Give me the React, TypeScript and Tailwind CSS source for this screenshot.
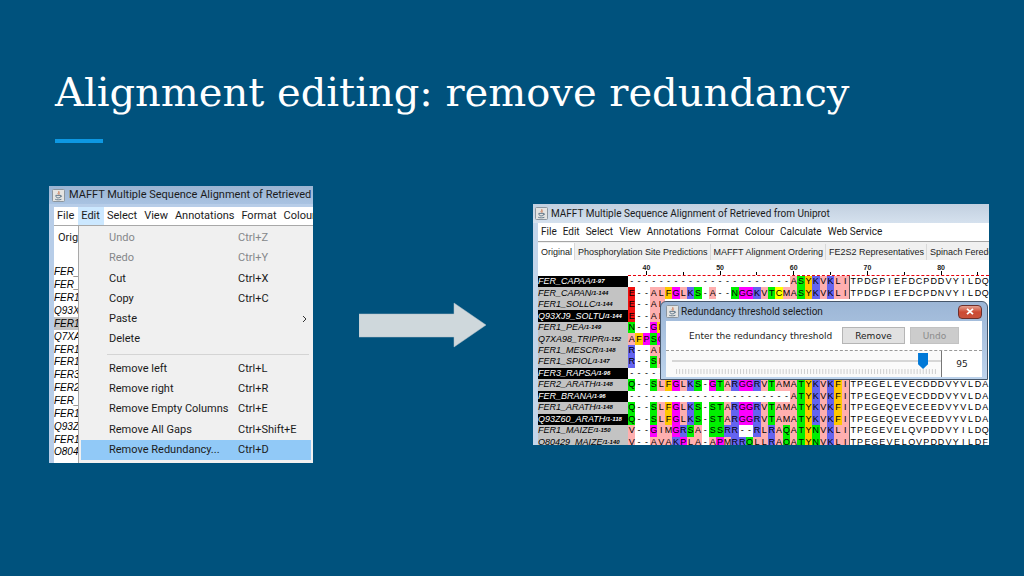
import { useState } from 'react';

const GAP22 = '-'.repeat(22);

const SEQUENCES = [
  { id: 'FER_CAPAA', range: '1-97', selected: true, seq: GAP22 + 'ASYKVKLITPDGPIEFDCPDDVYILDQ' },
  { id: 'FER_CAPAN', range: '1-144', seq: 'E--ALFGLKS-A--NGGKVTCMASYKVKLITPDGPIEFDCPDNVYILDQ' },
  { id: 'FER1_SOLLC', range: '1-144', seq: 'E--AL' },
  { id: 'Q93XJ9_SOLTU', range: '1-144', selected: true, seq: 'E--AL' },
  { id: 'FER1_PEA', range: '1-149', seq: 'N--GF' },
  { id: 'Q7XA98_TRIPR', range: '1-152', seq: 'AFPSG' },
  { id: 'FER1_MESCR', range: '1-148', seq: 'R--AL' },
  { id: 'FER1_SPIOL', range: '1-147', seq: 'R--SL' },
  { id: 'FER3_RAPSA', range: '1-96', selected: true, seq: '-----' },
  { id: 'FER2_ARATH', range: '1-148', seq: 'Q--SLFGLKS-GTARGGRVTAMATYKVKFITPEGELEVECDDDVYVLDA' },
  { id: 'FER_BRANA', range: '1-96', selected: true, seq: GAP22 + 'ATYKVKFITPEGEQEVECDDDVYVLDA' },
  { id: 'FER1_ARATH', range: '1-148', seq: 'Q--SLFGLKS-STARGGRVTAMATYKVKFITPEGEQEVECEEDVYVLDA' },
  { id: 'Q93Z60_ARATH', range: '1-118', selected: true, seq: 'Q--SLFGLKS-STARGGRVTAMATYKVKFITPEGEQEVECEEDVYVLDA' },
  { id: 'FER1_MAIZE', range: '1-150', seq: 'V--GIMGRSA-SSRR--RLRAQATYNVKLITPEGEVELQVPDDVYILDQ' },
  { id: 'O80429_MAIZE', range: '1-140', seq: 'V--AVAKPLA-APMRRQLLRAQATYNVKLITPEGEVELQVPDDVYILDF' },
];

// columns past this one are not part of the selected region
const COLOURED = 30;

const residueColour = (r: string) => {
  if ('AVLIM'.includes(r)) return 'bg-[#ffafaf]';
  if ('FYW'.includes(r)) return 'bg-[#ffc800]';
  if ('KRH'.includes(r)) return 'bg-[#6464f0]';
  if ('DE'.includes(r)) return 'bg-[#f01010]';
  if ('STNQ'.includes(r)) return 'bg-[#00f000]';
  if ('PG'.includes(r)) return 'bg-[#ff00ff]';
  if (r === 'C') return 'bg-[#ffff00]';
  return '';
};

const EDIT_TOP = [
  { label: 'Undo', key: 'Ctrl+Z', disabled: true },
  { label: 'Redo', key: 'Ctrl+Y', disabled: true },
  { label: 'Cut', key: 'Ctrl+X' },
  { label: 'Copy', key: 'Ctrl+C' },
  { label: 'Paste', sub: true },
  { label: 'Delete' },
];

const EDIT_BOTTOM = [
  { label: 'Remove left', key: 'Ctrl+L' },
  { label: 'Remove right', key: 'Ctrl+R' },
  { label: 'Remove Empty Columns', key: 'Ctrl+E' },
  { label: 'Remove All Gaps', key: 'Ctrl+Shift+E' },
  { label: 'Remove Redundancy...', key: 'Ctrl+D', active: true },
];

const MENUS = ['File', 'Edit', 'Select', 'View', 'Annotations', 'Format', 'Colour', 'Calculate', 'Web Service'];
const TABS = ['Original', 'Phosphorylation Site Predictions', 'MAFFT Alignment Ordering', 'FE2S2 Representatives', 'Spinach Feredoxin'];

function JavaIcon() {
  return (
    <svg viewBox="0 0 13 13" className="h-[13px] w-[13px] shrink-0" aria-hidden="true">
      <rect x=".5" y=".5" width="12" height="12" rx="1" fill="#e4e4e2" stroke="#8c969f" />
      <path d="M6.6 2c1.3 1.3-1.6 1.9-.2 3.6M8 3.4c-.9.6-1.1 1-.6 2" fill="none" stroke="#c9744f" strokeWidth=".9" />
      <path d="M3.8 6.4h4.8c0 1.6-.7 2.5-2.4 2.5S3.9 8 3.8 6.4ZM8.6 6.6c1.4-.2 1.4 1.3-.3 1.5M3.2 10.3c1.8.7 4.4.7 6.2 0" fill="none" stroke="#587184" strokeWidth=".9" />
    </svg>
  );
}

type Item = { label: string; key?: string; disabled?: boolean; sub?: boolean; active?: boolean };

function MenuItem({ item }: { item: Item }) {
  return (
    <button
      disabled={item.disabled}
      className={`mx-0.5 grid min-h-0 flex-1 grid-cols-[129px_1fr_auto] items-center pl-7 pr-1 text-left ${item.active ? 'bg-[#91c9f7]' : ''} ${item.disabled ? 'text-[#85878a]' : ''}`}
    >
      <span className="whitespace-nowrap">{item.label}</span>
      <span className="whitespace-nowrap">{item.key}</span>
      {item.sub && (
        <svg viewBox="0 0 5 8" className="h-2 w-[5px]" aria-hidden="true">
          <path d="M1 1l3 3-3 3" fill="none" stroke="#333" />
        </svg>
      )}
    </button>
  );
}

function EditMenuWindow() {
  return (
    <section className="flex h-[277px] flex-col overflow-hidden bg-[#b7cde8] font-['Roboto',sans-serif] text-[11px] leading-4 text-[#1b1b1b]">
      <div className="flex h-[18px] items-center gap-1 bg-linear-to-b from-[#9bb4d2] to-[#a9c3e2] pl-[3px]">
        <JavaIcon />
        <h2 className="whitespace-nowrap">MAFFT Multiple Sequence Alignment of Retrieved</h2>
      </div>
      <nav className="ml-[5px] mt-[3px] flex h-[18px] shrink-0 overflow-hidden bg-white">
        {MENUS.slice(0, 7).map((m) => (
          <button key={m} className={`shrink-0 pl-[3px] pr-1 ${m === 'Edit' ? 'bg-[#cce8ff]' : ''}`}>{m}</button>
        ))}
      </nav>
      <div className="ml-[5px] flex min-h-0 flex-1 border-t border-[#a8a8a8] bg-white">
        <div className="flex w-6 flex-col overflow-hidden pb-1">
          <p className="h-10 pl-1 pt-1">Orig</p>
          {SEQUENCES.map((s, i) => (
            <p key={s.id} className={`flex min-h-0 flex-1 items-center whitespace-nowrap font-['Liberation_Sans',sans-serif] text-[10px] leading-3 italic text-black ${i === 4 ? 'bg-[#c4c4c4]' : ''}`}>
              {s.id.slice(0, 4)}
            </p>
          ))}
        </div>
        <div className="flex flex-1 flex-col border-l border-[#a9a9a9] bg-[#f0f0f0] pb-[3px] pt-0.5">
          {EDIT_TOP.map((item) => <MenuItem key={item.label} item={item} />)}
          <hr className="mb-1 ml-7 mr-1 mt-1 border-[#d4d4d4]" />
          {EDIT_BOTTOM.map((item) => <MenuItem key={item.label} item={item} />)}
        </div>
      </div>
    </section>
  );
}

function RedundancyDialog() {
  const [threshold, setThreshold] = useState(95);
  return (
    <div role="dialog" aria-labelledby="dialog-title" className="absolute bottom-[65px] left-[127px] right-px top-[97px] flex flex-col rounded-t-md border border-[#46566a] bg-linear-to-b from-[#9cb6d6] to-[#bdd3ec] px-[5px] pb-0.5 text-[10px]">
      <div className="flex h-[19px] shrink-0 items-center gap-0.5">
        <JavaIcon />
        <h3 id="dialog-title" className="flex-1 whitespace-nowrap">Redundancy threshold selection</h3>
        <button aria-label="Close" className="flex h-[14px] w-6 items-center justify-center rounded-sm border border-[#6c2f2b] bg-linear-to-b from-[#e3a091] via-[#cc4a34] to-[#c9523d]">
          <svg viewBox="0 0 8 7" className="h-[7px] w-2" aria-hidden="true">
            <path d="M1 .8l6 5.4M7 .8L1 6.2" stroke="#fff" strokeWidth="1.8" />
          </svg>
        </button>
      </div>
      <div className="flex min-h-0 flex-1 flex-col bg-white font-['DejaVu_Sans',sans-serif] text-[9px]">
        <div className="flex h-[29px] shrink-0 items-center gap-[5px] pl-[23px] pr-[23px]">
          <label htmlFor="threshold" className="flex-1 whitespace-nowrap">Enter the redundancy threshold</label>
          <button className="h-[17px] w-[63px] border border-[#b5b5b5] bg-[#e1e1e1]">Remove</button>
          <button disabled className="h-[17px] w-[49px] border border-[#c2c2c2] bg-[#cccccc] text-[#8b8b8b]">Undo</button>
        </div>
        <div className="flex min-h-0 flex-1 border-t border-dashed border-[#999]">
          <div className="flex-1 bg-[#fafafa] pl-[6px] pt-0.5">
            <input
              id="threshold"
              type="range"
              min={0}
              max={100}
              value={threshold}
              onChange={(e) => setThreshold(Number(e.target.value))}
              className="block h-4 w-full appearance-none bg-transparent bg-[linear-gradient(#d6d6d6,#d6d6d6)] bg-[length:100%_2px] bg-[position:0_7px] bg-no-repeat [&::-webkit-slider-thumb]:h-4 [&::-webkit-slider-thumb]:w-[10px] [&::-webkit-slider-thumb]:appearance-none [&::-webkit-slider-thumb]:bg-[#0078d7] [&::-webkit-slider-thumb]:[clip-path:polygon(0_0,100%_0,100%_70%,50%_100%,0_70%)]"
            />
            <svg viewBox="0 0 265 5" preserveAspectRatio="none" className="h-[5px] w-full" aria-hidden="true">
              <path d="M4 2.5h258" stroke="#cfcfcf" strokeWidth="5" strokeDasharray="1 2" />
            </svg>
          </div>
          <input
            aria-label="Threshold value"
            value={threshold}
            onChange={(e) => setThreshold(Number(e.target.value) || 0)}
            className="w-[41px] border-l border-[#777] text-center outline-none"
          />
        </div>
      </div>
    </div>
  );
}

function Ruler() {
  return (
    <div className="ml-[90px] grid h-4 shrink-0 grid-cols-[repeat(49,minmax(0,1fr))] border-b border-dashed border-b-red-600 font-['Liberation_Sans',sans-serif] text-[7px] font-bold leading-[7px]">
      {Array.from({ length: 49 }, (_, i) => (
        <div key={i} className="flex flex-col items-center justify-end">
          {i % 10 === 2 && <span>{40 + i - 2}</span>}
          {i % 5 === 2 && <span className={`w-px bg-black ${i % 10 === 2 ? 'h-1' : 'h-[3px]'}`} />}
        </div>
      ))}
    </div>
  );
}

function AlignmentWindow() {
  return (
    <section className="relative flex h-[241px] flex-col overflow-hidden bg-[#c3d5ea] font-['Roboto',sans-serif] text-[10px] leading-4 text-[#1b1b1b]">
      <div className="flex h-[19px] shrink-0 items-center gap-[3px] bg-linear-to-b from-[#c2d0e0] to-[#d5e1ee] pl-[2px]">
        <JavaIcon />
        <h2 className="whitespace-nowrap">MAFFT Multiple Sequence Alignment of Retrieved from Uniprot</h2>
      </div>
      <div className="ml-[5px] flex min-h-0 flex-1 flex-col bg-white">
        <nav className="flex h-[19px] shrink-0 border-b border-[#a5a5a5]">
          {MENUS.map((m) => <button key={m} className="whitespace-nowrap px-[3px]">{m}</button>)}
        </nav>
        <div role="tablist" className="flex h-[18px] shrink-0 items-end overflow-hidden bg-[#f0f0f0] font-['Liberation_Sans',sans-serif] text-[9px]">
          {TABS.map((t, i) => (
            <button key={t} role="tab" aria-selected={i === 0} className={`shrink-0 whitespace-nowrap border-r border-[#d9d9d9] pl-[3px] pr-0.5 ${i === 0 ? 'h-[17px] bg-white' : 'h-4'}`}>{t}</button>
          ))}
        </div>
        <Ruler />
        <div className="grid h-[172px] shrink-0 grid-rows-[repeat(15,minmax(0,1fr))] font-['Liberation_Sans',sans-serif] text-[9px] leading-[11px] text-black">
          {SEQUENCES.map((s) => (
            <div key={s.id} className="grid grid-cols-[90px_1fr]">
              <p className={`flex items-center whitespace-nowrap italic ${s.selected ? 'bg-black text-white' : 'bg-[#c3c3c3]'}`}>
                {s.id}<span className="text-[6px] font-bold">/{s.range}</span>
              </p>
              <div className="grid grid-cols-[repeat(49,minmax(0,1fr))]">
                {s.seq.split('').map((r, i) => (
                  <span key={i} className={`flex items-center justify-center ${i < COLOURED ? residueColour(r) : ''} ${i === COLOURED ? 'border-l border-[#555]' : ''}`}>{r}</span>
                ))}
              </div>
            </div>
          ))}
        </div>
      </div>
      <RedundancyDialog />
    </section>
  );
}

export default function App() {
  return (
    <main className="min-h-screen bg-[#00527d] pb-12">
      <header className="px-[55px] pt-[62px]">
        <h1 className="whitespace-nowrap font-['Roboto_Slab','DejaVu_Serif',serif] text-[40px] leading-[60px] text-white">Alignment editing: remove redundancy</h1>
        <div className="mt-[17px] h-1 w-12 bg-[#0d98e3]" />
      </header>
      <div className="mt-[43px] grid grid-cols-[264fr_128fr_456fr] items-center gap-[46px] pl-[49px] pr-[35px]">
        <EditMenuWindow />
        <svg viewBox="0 0 128 46" className="w-full" aria-hidden="true">
          <path d="M0 12h95V1l32 22-32 22V35H0z" fill="#cfd8dc" stroke="#b3c1c9" strokeWidth=".5" />
        </svg>
        <AlignmentWindow />
      </div>
    </main>
  );
}
